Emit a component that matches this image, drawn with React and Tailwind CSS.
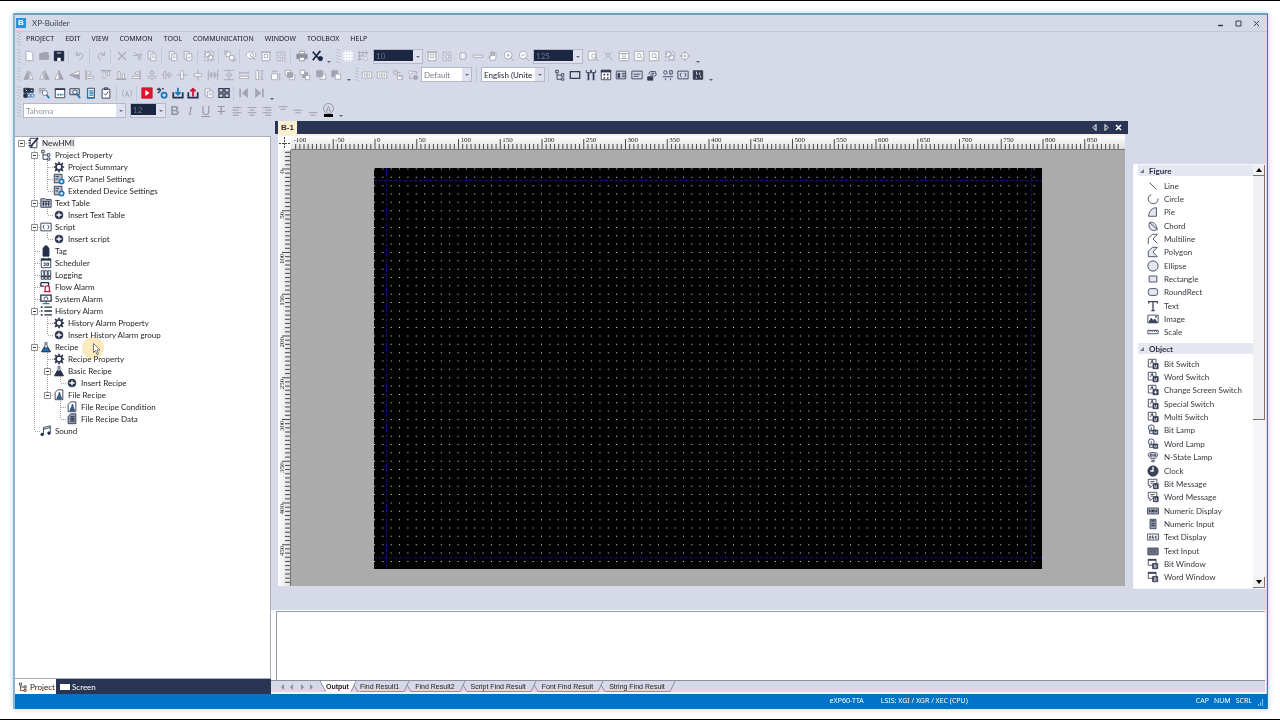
import { Fragment } from 'react'
import clsx from 'clsx'

// Glyphs share a 14x14 grid and inherit the colour of their button
const glyphs = {
  newFile: <path d="M4 1.500h5l2.500 2.500v8.500h-8v-10z" fill="#fff" />,
  open: <path d="M2 11V4h3l1-1h6v2M2 11l2-5h9l-1 5z" fill="currentColor" />,
  save: <><path d="M1.500 1.500h11v11h-11z" fill="currentColor" /><path d="M4.500 3.500h5" stroke="#fff" /><path d="M5 9h4v4h-4z" fill="#fff" stroke="none" /></>,
  undo: <path d="M3 2v4h4M3 6c2-3 8-3 7 2-1 2-2 3-4 4" />,
  redo: <path d="M11 2v4H7M11 6c-2-3-8-3-7 2 0 2 1 3 3 4" />,
  cross: <path d="M2.500 2.500l9 9M11.500 2.500l-9 9" strokeWidth="1.500" />,
  scissors: <><path d="M4 2l5 7M2 7l9-2" /><circle cx="10" cy="10" r="1.500" /><circle cx="11" cy="6" r="1.500" /></>,
  copy: <><path d="M2.500 1.500h6v9h-6z" fill="#eef" /><path d="M5.500 4.500h6v8h-6z" fill="#fff" /><path d="M7 7h3M7 9h3" /></>,
  pasteCheck: <><path d="M2.500 1.500h6v9h-6z" fill="#eef" /><path d="M5.500 4.500h6v8h-6z" fill="#fff" /><path d="M7 8l1 2 3-3" /></>,
  group: <><path d="M3 3h5v5H3zM6 6h5v5H6z" fill="#fff" /><path d="M1.500 1.500h11v11h-11z" strokeDasharray="2 2" /></>,
  ungroup: <><path d="M2.500 2.500h5v5h-5z" fill="#fff" /><path d="M6.500 6.500h5v5h-5z" fill="#fff" /><path d="M1 5v-4h4M13 9v4H9" /></>,
  speech: <><ellipse cx="7" cy="6" rx="5.500" ry="4" fill="#fff" /><circle cx="8" cy="6" r="2" /><path d="M9 8l3 4" /></>,
  box: <><path d="M2.500 2.500h9v10h-9z" fill="#fff" /><path d="M1 2.500h12M5 5h4v4H5z" /></>,
  boxDots: <><path d="M2.500 2.500h9v10h-9z" strokeDasharray="2 1" /><path d="M6 5.500h3v4H6z" fill="#fff" /></>,
  printer: <><path d="M1 5h12v5H1z" fill="currentColor" /><path d="M4 1.500h6v3H4zM4 8.500h6v4H4z" fill="#fff" /></>,
  tools: <><path d="M2 2l9 10M11 1L6 7l-4 5" strokeWidth="2" /><circle cx="11" cy="10" r="2.500" fill="currentColor" /></>,
  grid: <path d="M4 1v12M7 1v12M10 1v12M1 4h12M1 7h12M1 10h12" stroke="#fff" strokeWidth="1.500" />,
  gridGear: <><path d="M3 1v11M7 1v6M11 1v5M1 3h12M1 7h6M1 11h5" /><circle cx="10" cy="10" r="2" fill="#fff" /></>,
  gridDark: <><path d="M1 3h12M1 7h12M1 11h12M3 1v12M7 1v12M11 1v12" stroke="#fff" /><path d="M3 3h8v8H3z" /></>,
  bar: <path d="M1.500 6h11v2.500h-11z" fill="#fff" />,
  hand: <path d="M4 12L2 8l2 1V3h1.500v4V2H7v5-4.500h1.500V7L9 3.500h1.500V9L9 12z" fill="#fff" />,
  zoomIn: <><circle cx="6" cy="6" r="4.500" fill="#fff" /><path d="M9 9l4 4M4 6h4M6 4v4" /></>,
  zoomOut: <><circle cx="6" cy="6" r="4.500" fill="#fff" /><path d="M9 9l4 4M4 6h4" /></>,
  zoomBox: <><path d="M1.500 1.500h9v10h-9z" fill="#fff" /><circle cx="8" cy="7" r="2.500" /><path d="M10 9l3 4" /></>,
  zoomPage: <><path d="M1.500 1.500h11v11h-11z" fill="#fff" /><circle cx="7" cy="6.500" r="2.500" /><path d="M9 8l2 3" /></>,
  zoomWide: <><path d="M1.500 1.500h11v11h-11z" fill="#fff" /><path d="M1 4h12M3 10h8" /><circle cx="7" cy="6.500" r="2" /></>,
  zoomCross: <><path d="M2 2l3 3M12 2L9 5M2 12l3-3" strokeDasharray="1 1" /><circle cx="7" cy="6" r="2" /><path d="M9 8l3 4" /></>,
  target: <><circle cx="7" cy="7" r="4" fill="#fff" /><circle cx="7" cy="7" r="1" fill="currentColor" /><path d="M7 1v3M7 10v3M1 7h3M10 7h3" /></>,
  flipA: <><path d="M6 2v10H1z" fill="currentColor" /><path d="M8 3v9h4z" fill="#fff" /></>,
  flipB: <><path d="M6 3v9H2z" fill="#fff" /><path d="M8 2v10h5z" fill="currentColor" /></>,
  flipC: <><path d="M7 2v10H2z" fill="#fff" /><path d="M7 2v10h5z" fill="currentColor" /></>,
  flipD: <><path d="M12 2v5H1z" fill="#fff" /><path d="M12 12V7H1z" fill="currentColor" /></>,
  alignLeft: <><path d="M2 1v12" /><path d="M3 3.500h5v2.500H3zM3 8.500h8V11H3z" fill="#fff" /></>,
  alignTop: <><path d="M1 2h12" strokeWidth="1.500" /><path d="M3.500 3.500H6V11H3.500zM8.500 3.500H11v4H8.500z" fill="#fff" /></>,
  alignBottom: <><path d="M1 12h12" strokeWidth="1.500" /><path d="M3.500 3H6v8H3.500zM8.500 6H11v5H8.500z" fill="#fff" /></>,
  alignRight: <><path d="M12 1v12" /><path d="M6 3.500h5v2.500H6zM3 8.500h8V11H3z" fill="#fff" /></>,
  centreV: <><path d="M7 1v12" /><path d="M4.500 3.500h5v2h-5zM2.500 8.500h9v2h-9z" fill="#fff" /></>,
  centreH: <><path d="M1 7h12" /><path d="M3.500 3h2v8h-2zM8.500 4.500h2v5h-2z" fill="#fff" /></>,
  midV: <><path d="M1 7h12" /><path d="M5.500 2h3v10h-3z" fill="#fff" /></>,
  midH: <><path d="M7 1v12" /><path d="M2.500 5.500h9v3h-9z" fill="#fff" /></>,
  spreadH: <><path d="M1.500 1v12M12.500 1v12M1 7h12" /><path d="M4.500 4h1v6h-1zM8.500 4h1v6h-1z" fill="#fff" /></>,
  spreadV: <><path d="M1 1.500h12M1 12.500h12M7 2v10" /><path d="M4 6h6v2H4z" fill="#fff" /></>,
  sameW: <><path d="M2 4.500h10M2 3v3M12 3v3" /><path d="M1.500 8.500h11V11h-11z" fill="#fff" /></>,
  sameH: <><path d="M10.500 2v10M9 2h3M9 12h3" /><path d="M3.500 1.500h3v11h-3z" fill="#fff" /></>,
  sameBoth: <><path d="M3 5.500h7v7H3z" fill="#fff" /><path d="M3 2.500h7M12.500 5v8" /></>,
  layerFront: <><path d="M1.500 1.500h6v6h-6zM6.500 7h6v5.500h-6z" fill="#fff" /><path d="M4 4h6v6H4z" fill="currentColor" /></>,
  layerBack: <><path d="M4 4h6v6H4z" fill="currentColor" /><path d="M1.500 1.500h5v5h-5zM7.500 7.500h5v5h-5z" fill="#fff" /></>,
  layerUp: <><path d="M6 6h6.500v6H6z" fill="#fff" /><path d="M2 2h7v7H2z" fill="currentColor" /></>,
  layerDown: <><path d="M2 2h7v7H2z" fill="currentColor" /><path d="M6 6h6.500v6H6z" fill="#fff" /></>,
  frameA: <><path d="M1.500 3.500h11v7h-11z" fill="#fff" /><path d="M4 5v4M6 5.500h2v3H6zM10 5v4" /></>,
  shapes: <><circle cx="4" cy="4" r="2.500" /><path d="M6.500 7.500h6v5h-6z" fill="#fff" /><path d="M8 9h3v2M6 4h4" /></>,
  swap: <><circle cx="4" cy="4" r="2" fill="#fff" /><circle cx="10" cy="10" r="2.500" fill="currentColor" /><path d="M7 3h4v3M3 8v3h3" /></>,
  tree: <path d="M2 1.500h3v3H2zM8.500 5.500h3v3h-3zM8.500 10.500h3v2.500h-3zM3.500 5v7h5M3.500 7h5" />,
  rect: <path d="M1.500 3h11v8h-11z" strokeWidth="1.500" />,
  twinT: <><path d="M4 4v9M10 4v9" strokeWidth="2" /><path d="M1.500 1v3l5 .5V1M12.500 1v3l-5 .5V1" /></>,
  numTable: <><path d="M1.500 1.500h11v11h-11z" fill="#fff" /><path d="M1 2.500h12" strokeWidth="3" /><path d="M5 5.500v2M9 5.500v2M5 9.500v2M9 9.500v2" strokeWidth="2" /></>,
  panel: <><path d="M1.500 2.500h11v9h-11z" /><path d="M3.500 5h2v5h-2z" fill="currentColor" /><path d="M8 5h4M8 7h4M8 9h4" /></>,
  lines: <><path d="M1 2.500h12v9H1z" /><path d="M3 6h8M3 8.500h6" /></>,
  wave: <><path d="M2 9h6v4H2z" fill="currentColor" /><path d="M3 6l2-3h6l1 4-3 2M6 5h4M5 7h4" /></>,
  users: <><circle cx="4" cy="4" r="2" /><path d="M9 2h3v4H9zM1 9h12M4 11v2M10 11v2" /></>,
  braces: <><path d="M1 2.500h12v9H1z" /><path d="M5 4.500L3.500 7 5 9.500M9 4.500L10.500 7 9 9.500" /></>,
  black: <><path d="M1.500 2h11v10h-11z" fill="currentColor" /><path d="M5 3l1 4M9 4v3M5 9v2M10 8v2" stroke="#fff" /></>,
  screens: <><path d="M1 1.500h6v5H1zM7 2h5v4H7zM1 8h4v4H1z" fill="currentColor" /><path d="M3 3l2 2M9 4h2" stroke="#fff" /><circle cx="7" cy="10" r="2" stroke="#1878b8" /><circle cx="11" cy="10" r="2" stroke="#1878b8" /></>,
  lens: <><path d="M1 2h8M1 4h5M1 6h3" stroke="#8b90a0" /><circle cx="8" cy="7" r="3" fill="#fff" stroke="#6b7286" /><path d="M10 9l3 4" stroke="#1878b8" strokeWidth="2" /></>,
  windowBlue: <><path d="M1.500 2.500h11v10h-11z" fill="#fff" /><path d="M1 2.500h12" strokeWidth="2" /><path d="M4 9h7" stroke="#1878b8" strokeWidth="2" strokeDasharray="2 1" /></>,
  windowLens: <><path d="M1 2h11v7H1z" /><circle cx="7" cy="6" r="2.500" fill="#fff" /><path d="M9 8l4 5" stroke="#1878b8" strokeWidth="2" /></>,
  report: <><path d="M3 1.500h8v11H3z" fill="#fff" /><path d="M3 2v11h8M5 4.500h5M5 7h5M5 9.500h5" stroke="#1878b8" strokeWidth="1.500" /></>,
  clipboard: <><path d="M2.500 2.500h9v10.500h-9z" fill="#fff" /><path d="M5 1h4v2H5zM4.500 7.500l2 2 3-4" /></>,
  antenna: <path d="M4 3C1 5 1 9 4 12M10 3c3 2 3 6 0 9M5 11l2-6 2 6M6 9h2" />,
  play: <><path d="M1 1h12v12H1z" fill="#e8112d" stroke="#c80f28" /><path d="M5 3.500l5 3.500-5 3.500z" fill="#fff" stroke="none" /></>,
  wrenchGear: <><path d="M1 2l3 2M3 1l3 3M7 2h2M2 7l3-2" strokeWidth="1.500" /><circle cx="9.500" cy="9.500" r="3" stroke="#1878b8" strokeWidth="2" /></>,
  download: <><path d="M1.500 6v6.500h11V6" strokeWidth="2" /><path d="M7 1v8M4 6l3 3 3-3" stroke="#1878b8" strokeWidth="2" /></>,
  upload: <><path d="M1.500 6v6.500h11V6" strokeWidth="2" /><path d="M7 11V2M4 5l3-3 3 3" stroke="#d01030" strokeWidth="2" /></>,
  tiles: <path d="M1 2h5v4H1zM8 2h5v4H8zM1 8h5v4H1zM8 8h5v4H8z" strokeWidth="1.500" />,
  first: <><path d="M2.500 2v10" strokeWidth="2" /><path d="M11 2v10L5 7z" fill="currentColor" /></>,
  last: <><path d="M11.500 2v10" strokeWidth="2" /><path d="M3 2v10l6-5z" fill="currentColor" /></>,
  linesLeft: <path d="M2 3h10M2 6h7M2 9h10M2 12h7" />,
  linesCentre: <path d="M2 3h10M4 6h6M2 9h10M4 12h6" />,
  linesRight: <path d="M2 3h10M5 6h7M2 9h10M5 12h7" />,
  linesTop: <path d="M2 2h10M4 5h6" />,
  linesMid: <path d="M2 6h10M4 9h6" />,
  linesBottom: <path d="M2 9h10M4 12h6" />,
  // tree
  notebook: <><path d="M3.500 1.500h8v11h-8z" fill="#fff" /><path d="M1.500 4h3M1.500 7h3M1.500 10h3" /><path d="M13 1L6 9l-1 3" strokeWidth="2" /></>,
  gear: <><circle cx="7" cy="7" r="3.500" strokeWidth="2" /><path d="M7 1v2M7 11v2M1 7h2M11 7h2M2.500 2.500L4 4M10 10l1.500 1.500M11.500 2.500L10 4M4 10l-1.500 1.500" strokeWidth="2" /></>,
  panelGear: <><path d="M1.500 1.500h9v10h-9z" fill="#b9bfce" /><path d="M3 4h4M3 7h3" /><circle cx="10" cy="10" r="2.500" stroke="#1878b8" strokeWidth="2" fill="#fff" /></>,
  table: <><path d="M1 2h5l1 1h6v9H1z" fill="#c8ccd8" /><path d="M2 5h10M4 5v6M7 5v6M10 5v6M2 8h10" /></>,
  plus: <><circle cx="7" cy="7" r="4.500" fill="currentColor" /><path d="M7 4v6M4 7h6" stroke="#fff" strokeWidth="1.500" /></>,
  tag: <path d="M3.500 13V4L6 1h2l2.500 3v9z" fill="currentColor" />,
  calendar: <><path d="M1.500 2.500h11v10h-11z" fill="#fff" /><path d="M1 3h12" strokeWidth="2.500" /><path d="M4 1v3M10 1v3M4 7h2v3H4M8 7h2v3H8z" /></>,
  logging: <><path d="M1.500 2h3v10h-3zM5.500 2h3v10h-3zM9.500 2h3v10h-3z" fill="#fff" /><path d="M1 8.500h12" strokeWidth="2" strokeDasharray="3 1" /></>,
  flowAlarm: <><path d="M1 2h9v4M1 2v4h4" strokeWidth="1.500" /><path d="M6 12V8c0-3 5-3 5 0v4M4.500 12.500h8" stroke="#c81c3c" strokeWidth="1.500" /></>,
  monitor: <><path d="M1 2.500h12v7H1z" strokeWidth="1.500" fill="#fff" /><path d="M5 8V6c0-2 4-2 4 0v2M3 12.500h8M7 10v2" /></>,
  list: <><path d="M5 2.500h9M5 7h9M5 11.500h9" strokeWidth="1.500" /><path d="M1 2.500h2M1 7h2M1 11.500h2" strokeWidth="2" /></>,
  flaskBlue: <><path d="M6 1v4l-4 7.500h10L8 5V1" fill="#fff" /><path d="M4.500 8h5l2.500 4.500H2z" fill="#1878b8" /></>,
  flask: <><path d="M6 1v4l-4 7.500h10L8 5V1" fill="#fff" /><path d="M5 7h4l3 5.500H2z" fill="currentColor" /></>,
  fileFlask: <><path d="M2.500 4l3-3h6v11.500h-9z" fill="#fff" /><path d="M7 4v2l-2.500 5h5.500L8 6V4" fill="#1878b8" /></>,
  fileData: <><path d="M2.500 4l3-3h6v11.500h-9z" fill="#9aa0b2" /><path d="M5 4.500h5M5 7h5M5 9.500h5" strokeWidth="1.500" /></>,
  music: <><path d="M4 11V3l8-2v8M4 5l8-2" /><circle cx="2.500" cy="11" r="1.500" fill="currentColor" /><circle cx="10.500" cy="9.500" r="1.500" fill="currentColor" /></>,
  // figure and object palette
  line: <path d="M3 3l8 8" />,
  circle: <path d="M5 2C-1 4 1 13 8 12.500c3 0 5-3 5-6" />,
  pie: <path d="M2 12c0-6 4-10 9-10v10z" fill="#e4e6f0" />,
  chord: <path d="M3 3l9 8C6 15 0 9 3 3c4-2 8 2 9 8" fill="#e4e6f0" />,
  multiline: <path d="M1.500 13V6l5-4.500H12L7 7l5 5" />,
  polygon: <path d="M1.500 12.500V6l5-4.500H12L7 7l5 5.500z" fill="#e4e6f0" />,
  ellipse: <circle cx="7" cy="7" r="6" fill="#e4e6f0" />,
  rectangle: <path d="M2.500 3.500h9v7h-9z" fill="#e4e6f0" />,
  roundRect: <rect x="1.500" y="3" width="11" height="8" rx="3" fill="#e4e6f0" />,
  text: <path d="M2 4V2h10v2M7 2v10M5 12.500h4" strokeWidth="1.500" />,
  image: <><path d="M1 2.500h12v9H1z" fill="#fff" /><path d="M2 11l3-5 2 3 2-2 3 4zM10 4h1v1h-1z" fill="currentColor" /></>,
  scale: <path d="M1 5h12v4H1zM3.500 5v2M6 5v2M8.500 5v2M11 5v2" />,
  switch: <><path d="M1.500 1.500h9v9h-9z" fill="#fff" /><path d="M6 2v4M3.500 7L6 3l2 4" /><path d="M7 6.500h6v6H7z" fill="currentColor" /><path d="M9 8v3h2V8" stroke="#d5d8e5" /></>,
  switchPlus: <><path d="M1.500 1.500h9v9h-9z" fill="#fff" /><path d="M6 2v4M3.500 7L6 3l2 4" /><path d="M7 6.500h6v6H7z" fill="currentColor" /><path d="M8 9.500h4M10 7.500v4" stroke="#fff" /></>,
  lamp: <><circle cx="5" cy="4.500" r="3.500" fill="#eef0f6" /><path d="M3 8h4v3H3zM5 4v3" /><path d="M7.500 7h5v5h-5z" fill="currentColor" /><path d="M9 8.500v2h2v-2" stroke="#d5d8e5" /></>,
  stateLamp: <><path d="M1.500 4c0-3 11-3 11 0 0 3-2 3-3 5h-5c-1-2-3-2-3-5z" fill="#d0d4df" /><path d="M5 11h4M5 12.500h4M4 4h2v2H4zM8 4h2v2H8z" /></>,
  clock: <><circle cx="7" cy="7" r="6" fill="currentColor" /><path d="M7 2v5H4" stroke="#fff" strokeWidth="1.500" /></>,
  message: <><path d="M1.500 1.500h10v7h-5l-3 3V8.500h-2z" fill="#fff" /><path d="M4 4h5M4 6h3" /><path d="M7.500 6.500h5.500v6H7.500z" fill="currentColor" /><path d="M9 8v3h2V8" stroke="#d5d8e5" /></>,
  numDisplay: <><path d="M.500 3.500h13v7H.500z" fill="#a9aebb" /><path d="M3 5.500v3M6 5.500v3M8 5.500v3M11 5.500v3" strokeWidth="2" /></>,
  numInput: <><path d="M3.500 1.500h7v11h-7z" fill="#9da2b1" /><path d="M5 3.500h4M5 6.500h4M5 9h4" strokeWidth="1.500" /></>,
  textDisplay: <><path d="M.500 3.500h13v7H.500z" fill="#fff" /><path d="M3 6h1.500v2.500H3zM6.500 5v3.500H8V6.500M12 6h-2v2.500h2" /></>,
  textInput: <><path d="M1 3.500h12v8H1z" fill="#70778a" /><path d="M3 6h8M3 8h8" strokeDasharray="1 1" /></>,
  window: <><path d="M1.500 2.500h9v6h-9z" fill="#fff" /><path d="M1 2h10" strokeWidth="2" /><path d="M6.500 6.500h6v6h-6z" fill="currentColor" /><path d="M8.500 8h2v3h-2z" stroke="#d5d8e5" /></>,
}

function Glyph({ name, className }) {
  return (
    <svg viewBox="0 0 14 14" fill="none" stroke="currentColor" className={clsx('size-3 shrink-0', className)} aria-hidden="true">
      {glyphs[name]}
    </svg>
  )
}

function Grip() {
  return (
    <svg className="h-[15px] w-1 shrink-0 text-[#a3a7b6]" aria-hidden="true">
      <path d="M1 0v15" stroke="currentColor" strokeDasharray="1 2" />
      <path d="M3 1v14" stroke="currentColor" strokeDasharray="1 2" />
    </svg>
  )
}

const Sep = ({ className }) => <span className={clsx('h-[15px] w-px shrink-0 bg-[#c3c7d7]', className ?? 'mx-[2px]')} />

function Tools({ names, className, children }) {
  return (
    <div className={clsx('flex shrink-0 items-center', className)}>
      {names?.split(' ').map((name, i) => (
        <button key={i} type="button" aria-label={name} className="flex min-w-0 flex-1 justify-center">
          <Glyph name={name} />
        </button>
      ))}
      {children}
    </div>
  )
}

function Chevron({ className }) {
  return (
    <button type="button" aria-label="More" className={clsx('flex h-[15px] w-[9px] shrink-0 items-end justify-center text-[#5b6072]', className)}>
      <svg viewBox="0 0 4 4" className="size-1"><path d="M0 1h4L2 3z" fill="currentColor" /></svg>
    </button>
  )
}

function Combo({ label, value, dark, className }) {
  return (
    <label className={clsx('relative flex h-[15px] shrink-0 border border-[#b4b8c8] bg-[#dfe2ee]', className)}>
      <span className="sr-only">{label}</span>
      <select
        className={clsx(
          'mr-[9px] min-w-0 flex-1 appearance-none pl-[2px] text-[8px] leading-3 outline-none',
          dark ? 'mb-[2px] bg-[#1b2740] text-[#6b7488]' : 'bg-white',
        )}
      >
        <option>{value}</option>
      </select>
      <svg viewBox="0 0 4 4" className="pointer-events-none absolute top-[5px] right-[2px] size-1 text-[#666b7c]" aria-hidden="true">
        <path d="M0 1h4L2 3z" fill="currentColor" />
      </svg>
    </label>
  )
}

const menus = ['PROJECT', 'EDIT', 'VIEW', 'COMMON', 'TOOL', 'COMMUNICATION', 'WINDOW', 'TOOLBOX', 'HELP']

function Toolbars() {
  const one = 'w-[15px]'
  const wide = 'mr-[3px] ml-[2px]'
  return (
    <div className="shrink-0 pl-[2px] text-[#a2a5b1]">
      <div className="flex h-[18px] items-center">
        <Grip />
        <Tools names="newFile open" className="w-[30px]" />
        <Tools names="save" className="w-[15px] text-[#1b2740]" />
        <Sep className={wide} />
        <Tools names="undo" className={one} />
        <Sep className={wide} />
        <Tools names="redo" className={one} />
        <Sep className={wide} />
        <Tools names="cross scissors copy" className="w-[45px]" />
        <Sep className={wide} />
        <Tools names="copy pasteCheck" className="w-[30px]" />
        <Sep className={wide} />
        <Tools names="group" className={one} />
        <Sep className={wide} />
        <Tools names="ungroup" className={one} />
        <Sep className={wide} />
        <Tools names="speech box boxDots" className="w-[45px]" />
        <Sep className={wide} />
        <Tools names="printer" className="w-[15px] text-[#8b8e9b]" />
        <Tools names="tools" className="w-[15px] text-[#1b2740]" />
        <Chevron className="mr-[3px]" />
        <Grip />
        <Tools names="grid gridGear" className="mr-[2px] w-[31px]" />
        <Combo label="Grid size" value="10" dark className="w-[50px]" />
        <Tools names="box boxDots gridDark bar hand zoomIn zoomOut" className="mx-px w-[108px]" />
        <Combo label="Zoom" value="125" dark className="w-[50px]" />
        <Tools names="zoomBox zoomCross zoomWide zoomPage zoomPage group target" className="ml-[2px] w-[108px]" />
        <Chevron />
      </div>
      <div className="flex h-[19px] items-center">
        <Grip />
        <Tools
          names="flipA flipB flipC flipD alignLeft alignTop alignBottom alignRight centreV centreH midV midH spreadH spreadV sameW sameH sameBoth layerFront layerBack layerUp layerDown"
          className="w-[323px]"
        />
        <Chevron className="mr-[2px]" />
        <Grip />
        <Tools names="frameA frameA shapes swap" className="w-[62px]" />
        <Combo label="State" value="Default" className="w-[51px] text-[#7b7e8a]" />
        <Sep className="mx-1" />
        <Combo label="Language" value="English (Unite" className="w-[64px] border-[#9da2b5] text-[#22252e]" />
        <Sep className="mx-[3px]" />
        <Tools names="tree rect twinT numTable panel lines wave users braces black" className="w-[154px] text-[#333b50]" />
        <Chevron />
      </div>
      <div className="flex h-[18px] items-center">
        <Grip />
        <Tools names="screens lens windowBlue windowLens report clipboard" className="w-[93px] text-[#26304a]" />
        <Sep />
        <Tools names="antenna" className={one} />
        <Sep />
        <Tools names="play wrenchGear download upload" className="w-[62px] text-[#26304a]" />
        <Tools names="copy" className={one} />
        <Tools names="tiles" className="w-[15px] text-[#333b50]" />
        <Sep />
        <Tools names="first last" className="w-[31px]" />
        <Chevron />
      </div>
      <div className="flex h-[17px] items-center text-[#9295a2]">
        <Grip />
        <Combo label="Font" value="Tahoma" className="ml-[2px] w-[103px]" />
        <Combo label="Font size" value="12" dark className="ml-1 w-[36px]" />
        <Tools className="ml-px w-[62px] font-['Liberation_Sans'] text-[12px] leading-none">
          <button type="button" className="flex-1 font-bold">B</button>
          <button type="button" className="flex-1 font-['Liberation_Serif'] italic">I</button>
          <button type="button" className="flex-1 underline">U</button>
          <button type="button" className="flex-1 line-through">T</button>
        </Tools>
        <Tools names="linesLeft linesCentre linesRight linesTop linesMid linesBottom" className="w-[92px]" />
        <button type="button" aria-label="Font colour" className="flex h-[15px] w-[15px] flex-col items-center">
          <span className="flex h-[11px] w-[11px] items-center justify-center rounded-full border text-[8px] leading-none">A</span>
          <span className="h-[3px] w-[9px] bg-black" />
        </button>
        <Chevron />
      </div>
    </div>
  )
}

const project = {
  name: 'NewHMI', icon: 'notebook', children: [
    { name: 'Project Property', icon: 'tree', children: [
      { name: 'Project Summary', icon: 'gear' },
      { name: 'XGT Panel Settings', icon: 'panelGear' },
      { name: 'Extended Device Settings', icon: 'panelGear' },
    ] },
    { name: 'Text Table', icon: 'table', children: [{ name: 'Insert Text Table', icon: 'plus' }] },
    { name: 'Script', icon: 'braces', children: [{ name: 'Insert script', icon: 'plus' }] },
    { name: 'Tag', icon: 'tag' },
    { name: 'Scheduler', icon: 'calendar' },
    { name: 'Logging', icon: 'logging' },
    { name: 'Flow Alarm', icon: 'flowAlarm' },
    { name: 'System Alarm', icon: 'monitor' },
    { name: 'History Alarm', icon: 'list', children: [
      { name: 'History Alarm Property', icon: 'gear' },
      { name: 'Insert History Alarm group', icon: 'plus' },
    ] },
    { name: 'Recipe', icon: 'flaskBlue', children: [
      { name: 'Recipe Property', icon: 'gear' },
      { name: 'Basic Recipe', icon: 'flask', children: [{ name: 'Insert Recipe', icon: 'plus' }] },
      { name: 'File Recipe', icon: 'fileFlask', children: [
        { name: 'File Recipe Condition', icon: 'fileFlask' },
        { name: 'File Recipe Data', icon: 'fileData' },
      ] },
    ] },
    { name: 'Sound', icon: 'music' },
  ],
}

// trail holds, for each ancestor level, whether its guide line goes on below
function TreeNode({ node, trail = [], last = true, root = false }) {
  return (
    <li>
      <div className="flex h-3 items-center">
        {trail.map((on, i) => (
          <svg key={i} className="h-3 w-[13px] shrink-0" stroke="#a5a5a5" strokeDasharray="1 1">
            {on && <path d="M6.500 0v12" />}
          </svg>
        ))}
        <svg className="h-3 w-3 shrink-0" fill="none" stroke="#a5a5a5">
          {!root && <path d={last ? 'M6.500 0v6' : 'M6.500 0v12'} strokeDasharray="1 1" />}
          <path d="M7 6.500h6" strokeDasharray="1 1" />
          {node.children && <path d="M3.500 3.500h6v6h-6z" fill="#fff" stroke="#8d8d8d" />}
          {node.children && <path d="M5 6.500h3" stroke="#333" />}
        </svg>
        <Glyph name={node.icon} className="text-[#26304a]" />
        <button type="button" className={clsx('ml-[2px] px-px whitespace-nowrap', root && 'bg-[#efefef]')}>{node.name}</button>
      </div>
      {node.children && (
        <ul>
          {node.children.map((c, i) => (
            <TreeNode
              key={c.name}
              node={c}
              trail={root ? [false] : [...trail, !last]}
              last={i === node.children.length - 1}
            />
          ))}
        </ul>
      )}
    </li>
  )
}

function ProjectPanel() {
  return (
    <aside className="flex w-[256px] shrink-0 flex-col pt-[17px]">
      <div className="relative min-h-0 flex-1 border border-l-0 border-[#a9adba] bg-white">
        <ul className="text-[8px] leading-3 text-[#24262c]">
          <TreeNode node={project} root />
        </ul>
        {/* Click halo and pointer */}
        <div className="absolute top-[200px] left-[67px] size-[22px] rounded-full bg-[#f9dc90] opacity-60 mix-blend-multiply" />
        <svg viewBox="0 0 8 12" className="absolute top-[206px] left-[78px] h-3 w-2" fill="#fff" stroke="#444" strokeWidth=".7">
          <path d="M.500.500v9l2-2 1.500 4 1.500-.5L4 7h3z" />
        </svg>
      </div>
      <div className="flex h-[15px] shrink-0 bg-[#293553] text-[8px]">
        <button type="button" className="flex w-[41px] items-center gap-[2px] bg-white pl-[3px] text-[#222]">
          <Glyph name="tree" className="size-[10px]" />Project
        </button>
        <button type="button" className="flex items-center gap-[2px] pl-1 text-white">
          <span className="h-[6px] w-[10px] bg-white" />Screen
        </button>
      </div>
    </aside>
  )
}

// Canvas runs at 0.835 screen pixels per panel pixel
const SCALE = 0.835
const range = (from, to, step) => Array.from({ length: Math.floor((to - from) / step) + 1 }, (_, i) => from + i * step)

function RulerTop() {
  return (
    <svg className="h-[14px] min-w-0 flex-1 bg-gradient-to-b from-white to-[#dcdcdc] font-['Liberation_Serif'] text-[7px]" stroke="#4a4a4a">
      {range(-95, 890, 5).map((v) => {
        const x = 84 + v * SCALE
        return <path key={v} d={`M${x} ${v % 50 ? 8 : 3}V13`} />
      })}
      {range(-100, 850, 50).map((v) => (
        <text key={v} x={86 + v * SCALE} y="6" fill="#222" stroke="none">{v}</text>
      ))}
      <path d="M0 13.500h2000" stroke="#777" />
    </svg>
  )
}

function RulerSide() {
  return (
    <svg className="w-[13px] shrink-0 self-stretch bg-gradient-to-r from-white to-[#dcdcdc] font-['Liberation_Serif'] text-[7px]" stroke="#4a4a4a">
      {range(-20, 495, 5).map((v) => {
        const y = 19 + v * SCALE
        return <path key={v} d={`M${v % 50 ? 7 : 4} ${y}H12`} />
      })}
      {range(0, 450, 50).map((v) => (
        <text key={v} transform={`translate(6 ${20 + v * SCALE}) rotate(-90)`} textAnchor="end" fill="#222" stroke="none">{v}</text>
      ))}
      <path d="M12.500 0v2000" stroke="#777" />
    </svg>
  )
}

function ScreenEditor() {
  return (
    <main className="flex min-w-0 flex-1 flex-col pt-[2px] pb-[3px]">
      <div className="flex h-[13px] shrink-0 items-stretch bg-[#293553] pl-[3px]">
        <button type="button" className="w-[19px] bg-[#fdf0cf] font-['Liberation_Sans'] text-[8px] leading-[13px] font-bold text-[#333]">B-1</button>
        <div className="ml-auto flex items-center gap-[3px] pr-[5px] text-white">
          <button type="button" aria-label="Previous"><svg viewBox="0 0 9 9" className="size-[9px]" fill="none" stroke="currentColor"><path d="M6 1.500v6l-3-3z" /></svg></button>
          <button type="button" aria-label="Next"><svg viewBox="0 0 9 9" className="size-[9px]" fill="none" stroke="currentColor"><path d="M3 1.500v6l3-3z" /></svg></button>
          <button type="button" aria-label="Close"><svg viewBox="0 0 9 9" className="size-[9px]" fill="none" stroke="currentColor" strokeWidth="1.500"><path d="M2 2l5 5M7 2L2 7" /></svg></button>
        </div>
      </div>
      <div className="mr-[3px] ml-[3px] flex min-h-0 flex-1 flex-col border-t-2 border-[#fbf1dc]">
        <div className="flex shrink-0">
          <svg viewBox="0 0 13 14" className="h-[14px] w-[13px] shrink-0 bg-white" stroke="#444">
            <path d="M6.500 1v12M1 7.500h12" strokeDasharray="2 1" />
          </svg>
          <RulerTop />
        </div>
        <div className="flex min-h-0 flex-1">
          <RulerSide />
          <div className="min-w-0 flex-1 overflow-hidden bg-[#ababab] pt-[18px] pl-[83px]">
            <svg viewBox="0 0 800 480" className="h-[401px] w-[668px] bg-black">
              {range(0, 470, 10).map((y) => (
                <path key={y} d={`M0 ${y + 1}H800`} stroke="#dedede" strokeWidth="1.200" strokeDasharray="1.200 8.800" />
              ))}
              <path d="M15 0v480M787 0v480M0 15h800M0 466.500h800" stroke="#1a0f80" strokeWidth="1.200" strokeDasharray="4 2" />
            </svg>
          </div>
        </div>
      </div>
    </main>
  )
}

const figures = [
  ['Line', 'line'], ['Circle', 'circle'], ['Pie', 'pie'], ['Chord', 'chord'], ['Multiline', 'multiline'],
  ['Polygon', 'polygon'], ['Ellipse', 'ellipse'], ['Rectangle', 'rectangle'], ['RoundRect', 'roundRect'],
  ['Text', 'text'], ['Image', 'image'], ['Scale', 'scale'],
]

const objects = [
  ['Bit Switch', 'switch'], ['Word Switch', 'switch'], ['Change Screen Switch', 'switchPlus'],
  ['Special Switch', 'switch'], ['Multi Switch', 'switch'], ['Bit Lamp', 'lamp'], ['Word Lamp', 'lamp'],
  ['N-State Lamp', 'stateLamp'], ['Clock', 'clock'], ['Bit Message', 'message'], ['Word Message', 'message'],
  ['Numeric Display', 'numDisplay'], ['Numeric Input', 'numInput'], ['Text Display', 'textDisplay'],
  ['Text Input', 'textInput'], ['Bit Window', 'window'], ['Word Window', 'window'],
]

function Palette({ title, items, className }) {
  return (
    <section>
      <h2 className="ml-1 flex h-[11px] items-center gap-[5px] bg-[#e5e7f1] pl-[2px] text-[8px] font-bold text-[#2b3046]">
        <svg viewBox="0 0 4 4" className="size-1"><path d="M4 0v4H0z" fill="#777" /></svg>
        {title}
      </h2>
      <ul className={clsx('flex flex-col pl-[13px] text-[8px] text-[#34373f]', className)}>
        {items.map(([name, icon]) => (
          <li key={name} className="flex flex-1 items-center">
            <button type="button" className="flex items-center gap-[5px] whitespace-nowrap">
              <Glyph name={icon} className="text-[#3b4258]" />{name}
            </button>
          </li>
        ))}
      </ul>
    </section>
  )
}

function Toolbox() {
  const cap = 'flex h-[11px] items-center justify-center border-r border-b border-[#777] bg-[#f0f0f2]'
  return (
    <aside className="mt-[45px] mr-px ml-[5px] flex w-[133px] shrink-0 border border-[#f7f8fc] bg-white">
      <div className="min-w-0 flex-1">
        <Palette title="Figure" items={figures} className="mt-[3px] mb-1 h-[160px]" />
        <Palette title="Object" items={objects} className="mt-[3px] h-[227px]" />
      </div>
      <div className="flex w-3 shrink-0 flex-col bg-[#f6f6f8]">
        <button type="button" aria-label="Scroll up" className={cap}>
          <svg viewBox="0 0 6 4" className="h-1 w-[6px]"><path d="M0 4h6L3 0z" /></svg>
        </button>
        <div className="h-[244px] border-r border-b border-[#777] bg-[#f0f0f2]" />
        <button type="button" aria-label="Scroll down" className={clsx(cap, 'mt-auto')}>
          <svg viewBox="0 0 6 4" className="h-1 w-[6px]"><path d="M0 0h6L3 4z" /></svg>
        </button>
      </div>
    </aside>
  )
}

const results = ['Find Result1', 'Find Result2', 'Script Find Result', 'Font Find Result', 'String Find Result']

function OutputPanel() {
  return (
    <section className="mr-px flex h-[84px] shrink-0 flex-col border-r border-b-2 border-[#f4f5fa] bg-white">
      <div className="h-px shrink-0 bg-white" />
      <div className="ml-[5px] min-h-0 flex-1 border-t border-l border-[#9498a6] bg-white" />
      <div className="flex h-[12px] shrink-0 border-t border-[#8b8f9e] bg-[#d6d9e8] pl-[5px] font-['Liberation_Sans'] text-[7px] text-[#222]">
        <div className="flex w-[44px] items-center justify-between px-[2px] text-[#8b8f9e]">
          {['M2 1v6M6 1v6L3 4z', 'M5 1v6L2 4z', 'M3 1v6l3-3z', 'M6 1v6M2 1v6l3-3z'].map((d) => (
            <button key={d} type="button" aria-label="Scroll tabs">
              <svg viewBox="0 0 10 8" className="h-2 w-[10px]" fill="currentColor"><path d={d} /></svg>
            </button>
          ))}
        </div>
        <svg viewBox="0 0 6 11" className="h-[11px] w-[6px]"><path d="M0 0l6 11V0z" fill="#fff" /><path d="M0 0l6 11" stroke="#8b8f9e" /></svg>
        <button type="button" className="bg-white text-[7px] leading-[11px] font-bold">Output</button>
        <svg viewBox="0 0 11 11" className="h-[11px] w-[11px]" fill="none"><path d="M0 0h7L2 11H0z" fill="#fff" /><path d="M7 0L2 11M5 4l4 7h2" stroke="#8b8f9e" /></svg>
        {results.map((name, i) => (
          <Fragment key={name}>
            <button type="button" className="border-b border-[#8b8f9e] leading-[11px] whitespace-nowrap">{name}</button>
            <svg viewBox="0 0 16 11" className="h-[11px] w-4" fill="none" stroke="#8b8f9e">
              <path d={i < results.length - 1 ? 'M0 10.500h5L10 0M8 4l4 6.500h4' : 'M0 10.500h5L10 0'} />
            </svg>
          </Fragment>
        ))}
      </div>
    </section>
  )
}

export default function App() {
  return (
    <div className="flex h-screen flex-col overflow-hidden border-y border-black bg-white pt-3 pr-3 pb-[10px] pl-[13px] font-['Lato',sans-serif] text-[8px]">
      <div className="flex min-h-0 flex-1 flex-col border-t-2 border-r border-l-2 border-t-[#6e9fbd] border-r-[#2f7fb0] border-l-[#8fb3cd] bg-[#d6d9e8] shadow-[0_0_6px_#b9d3ea]">
        <header className="flex h-[17px] shrink-0 items-center border-b border-[#c3c8da] pl-px text-[#3b3f4c]">
          <span className="flex size-[10px] items-center justify-center bg-[#1f97dc] font-['Liberation_Sans'] text-[8px] leading-none font-bold text-white">B</span>
          <h1 className="ml-[6px] text-[8px]">XP-Builder</h1>
          <div className="ml-auto flex items-center gap-[9px] pr-[6px]">
            <button type="button" aria-label="Minimise"><svg viewBox="0 0 9 9" className="size-[9px]" stroke="currentColor"><path d="M2 6.500h5" strokeWidth="1.500" /></svg></button>
            <button type="button" aria-label="Maximise"><svg viewBox="0 0 9 9" className="size-[9px]" fill="none" stroke="currentColor"><path d="M2 2h5v5H2z" /></svg></button>
            <button type="button" aria-label="Close"><svg viewBox="0 0 9 9" className="size-[9px]" stroke="currentColor"><path d="M2 2l5 5M7 2L2 7" /></svg></button>
          </div>
        </header>
        <nav className="flex h-[15px] shrink-0 items-center pl-[2px] font-['Noto_Sans'] text-[7px] text-[#16181f]">
          <Grip />
          <div className="ml-[5px] flex gap-[11px]">
            {menus.map((m) => <button key={m} type="button">{m}</button>)}
          </div>
        </nav>
        <Toolbars />
        <div className="flex min-h-0 flex-1">
          <ProjectPanel />
          <div className="flex min-w-0 flex-1 flex-col gap-[21px]">
            <div className="flex min-h-0 flex-1 pl-1">
              <ScreenEditor />
              <Toolbox />
            </div>
            <OutputPanel />
          </div>
        </div>
        <footer className="flex h-[15px] shrink-0 items-center bg-[#0073c8] font-['Noto_Sans'] text-[7px] text-white">
          <span className="ml-auto">eXP60-TTA</span>
          <span className="ml-[17px]">LSIS: XGI / XGR / XEC (CPU)</span>
          <span className="ml-[228px]">CAP</span>
          <span className="ml-[5px]">NUM</span>
          <span className="ml-[5px]">SCRL</span>
          <svg viewBox="0 0 8 8" className="mr-[3px] ml-1 size-2" stroke="#8cc4ee"><path d="M6.500 1v7M4.500 4v4M2.500 6v2" /></svg>
        </footer>
      </div>
    </div>
  )
}
